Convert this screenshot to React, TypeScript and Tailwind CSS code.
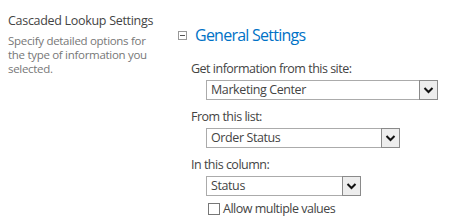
import React from 'react'

function Select({ value, width }: { value: string; width: string }) {
  return (
    <div className={`flex h-[20px] ${width} border border-[#ababab] bg-white`}>
      <div className="flex-1 pl-[4px] text-[12.5px] leading-[18px] tracking-[-0.4px] text-[#444]">{value}</div>
      <div className="-my-px -mr-px flex w-[19px] items-center justify-center border border-[#8a8a8a] bg-[#ededed]">
        <svg width="11" height="8" viewBox="0 0 11 8">
          <path d="M1.5 2 L5.5 6 L9.5 2" fill="none" stroke="#111" strokeWidth="2" />
        </svg>
      </div>
    </div>
  )
}

export default function App() {
  return (
    <div className="flex h-[219px] w-[474px] bg-white font-['Open_Sans',sans-serif]">
      <div className="w-[178px] pl-[8px] pt-[12px]">
        <div className="text-[12.5px] leading-[17px] tracking-[-0.3px] text-[#444]">Cascaded Lookup Settings</div>
        <div className="mt-[5px] w-[150px] text-[11.5px] leading-[14px] tracking-[-0.3px] text-[#777]">
          Specify detailed options for the type of information you selected.
        </div>
      </div>
      <div className="flex-1 pt-[25px]">
        <div className="flex items-center gap-[8px]">
          <div className="flex h-[9px] w-[9px] items-center justify-center border border-[#999]">
            <div className="h-px w-[5px] bg-[#555]" />
          </div>
          <div className="text-[16px] leading-[20px] tracking-[-0.75px] text-[#0072c6]">General Settings</div>
        </div>
        <div className="pl-[13px]">
          <div className="mt-[16px] text-[12.5px] leading-[16px] tracking-[-0.5px] text-[#444]">Get information from this site:</div>
          <div className="mt-[3px] pl-[15px]">
            <Select value="Marketing Center" width="w-[232px]" />
          </div>
          <div className="mt-[9px] text-[12.5px] leading-[16px] tracking-[-0.5px] text-[#444]">From this list:</div>
          <div className="mt-[3px] pl-[15px]">
            <Select value="Order Status" width="w-[194px]" />
          </div>
          <div className="mt-[9px] text-[12.5px] leading-[16px] tracking-[-0.5px] text-[#444]">In this column:</div>
          <div className="mt-[3px] pl-[15px]">
            <Select value="Status" width="w-[155px]" />
            <div className="mt-[6px] flex items-center gap-[3px] pl-[2px]">
              <div className="h-[12px] w-[12px] border border-[#777] bg-white" />
              <div className="text-[12.5px] leading-[14px] tracking-[-0.5px] text-[#444]">Allow multiple values</div>
            </div>
          </div>
        </div>
      </div>
    </div>
  )
}
